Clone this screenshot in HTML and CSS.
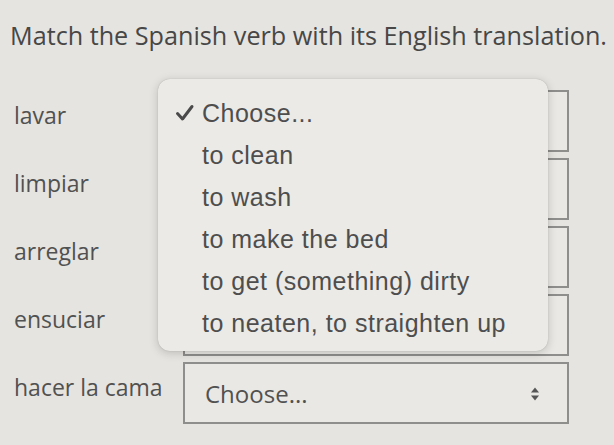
FILE: index.html
```html
<!DOCTYPE html>
<html lang="en">
<head>
    <meta charset="UTF-8">
    <title>Match</title>
    <link rel="stylesheet" href="styles.css">
</head>
<body>
    <div class="page">
        <h1 class="question">Match the Spanish verb with its English translation.</h1>
        <div class="answers">
            <div class="row">
                <div class="label">lavar</div>
                <div class="select"><span>Choose...</span></div>
            </div>
            <div class="row">
                <div class="label">limpiar</div>
                <div class="select"><span>Choose...</span></div>
            </div>
            <div class="row">
                <div class="label">arreglar</div>
                <div class="select"><span>Choose...</span></div>
            </div>
            <div class="row">
                <div class="label">ensuciar</div>
                <div class="select"><span>Choose...</span></div>
            </div>
            <div class="row">
                <div class="label">hacer la cama</div>
                <div class="select">
                    <span>Choose...</span>
                    <svg class="arrows" width="10" height="16" viewBox="0 0 10 16">
                        <path d="M1 6.5 L5 1.5 L9 6.5 Z" fill="#555"/>
                        <path d="M1 9.5 L5 14.5 L9 9.5 Z" fill="#555"/>
                    </svg>
                </div>
            </div>

            <div class="menu">
                <div class="option checked">
                    <svg class="check" width="20" height="18" viewBox="0 0 20 18">
                        <path d="M2.5 9.5 L7.5 15 L17 2.5" fill="none" stroke="#4a4a4a" stroke-width="3" stroke-linecap="round" stroke-linejoin="round"/>
                    </svg>
                    Choose...
                </div>
                <div class="option">to clean</div>
                <div class="option">to wash</div>
                <div class="option">to make the bed</div>
                <div class="option">to get (something) dirty</div>
                <div class="option">to neaten, to straighten up</div>
            </div>
        </div>
    </div>
</body>
</html>
```

FILE: styles.css
```css
body {
    margin: 0;
    padding: 0;
    background-color: #e5e4e0;
    font-family: 'Open Sans', sans-serif;
    color: #515151;
    height: 445px;
    overflow: hidden;
}
.page {
    padding: 0 0 0 10px;
}
.question {
    margin: 0;
    padding-top: 17px;
    font-size: 25.2px;
    font-weight: 400;
    line-height: 36px;
    color: #474747;
    white-space: nowrap;
}
.answers {
    position: relative;
    margin-top: 37px;
    display: flex;
    flex-direction: column;
    gap: 6px;
}
.row {
    display: flex;
    align-items: flex-start;
}
.label {
    width: 171px;
    padding-top: 10px;
    padding-left: 4px;
    font-size: 23px;
    line-height: 30px;
}
.select {
    width: 386px;
    height: 62px;
    box-sizing: border-box;
    border: 2px solid #8e8e8c;
    background-color: #e9e8e4;
    display: flex;
    align-items: center;
    justify-content: space-between;
    padding: 0 27px 0 20px;
    margin-left: -2px;
    font-size: 24px;
}
.arrows {
    margin-top: 2px;
}
.menu {
    position: absolute;
    left: 148px;
    top: -11px;
    width: 390px;
    height: 272px;
    box-sizing: border-box;
    background-color: #ebeae7;
    border-radius: 12px;
    box-shadow: 0 2px 10px rgba(0, 0, 0, 0.18), 0 0 1px rgba(0, 0, 0, 0.25);
    padding-top: 13px;
    font-family: 'Liberation Sans', Arial, sans-serif;
    color: #4e4e4e;
}
.option {
    position: relative;
    height: 42px;
    line-height: 42px;
    padding-left: 44px;
    font-size: 25px;
    letter-spacing: 0.5px;
}
.check {
    position: absolute;
    left: 17px;
    top: 12px;
}
```
